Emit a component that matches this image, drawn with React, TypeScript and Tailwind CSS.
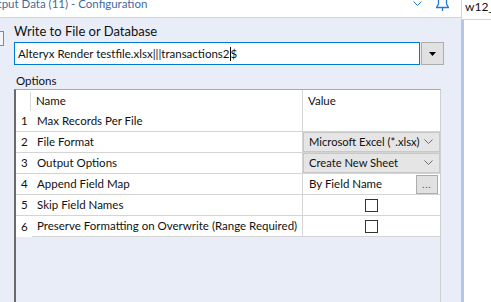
// Output Data tool - configuration panel (Alteryx designer)
import React from "react";

const FONT = { fontFamily: 'Lato, "Open Sans", Arial, sans-serif' };

type Row = { n: number; name: string; kind: "empty" | "combo" | "text" | "check"; value?: string };

const rows: Row[] = [
  { n: 1, name: "Max Records Per File", kind: "empty" },
  { n: 2, name: "File Format", kind: "combo", value: "Microsoft Excel (*.xlsx)" },
  { n: 3, name: "Output Options", kind: "combo", value: "Create New Sheet" },
  { n: 4, name: "Append Field Map", kind: "text", value: "By Field Name" },
  { n: 5, name: "Skip Field Names", kind: "check" },
  { n: 6, name: "Preserve Formatting on Overwrite (Range Required)", kind: "check" },
];

function Chevron({ className }: { className?: string }) {
  return (
    <svg width="9" height="6" viewBox="0 0 9 6" className={className}>
      <path d="M0.5 0.5 L4.5 4.5 L8.5 0.5" fill="none" stroke="currentColor" strokeWidth="1" />
    </svg>
  );
}

function Pin() {
  return (
    <svg width="13" height="11" viewBox="0 0 13 11" className="text-[#1f7ad8]">
      <path d="M2.5 -2 V4 L0.5 7.5 H12.5 L10.5 4 V-2" fill="none" stroke="currentColor" strokeWidth="1.3" />
      <path d="M6.5 7.5 V11" stroke="currentColor" strokeWidth="1.3" />
    </svg>
  );
}

function ValueCell({ row }: { row: Row }) {
  if (row.kind === "combo") {
    return (
      <div className="flex h-full items-center justify-between whitespace-nowrap border border-[#c8c8c8] bg-[#e5e5e5] pl-[5px] pr-[6px]">
        <span className="text-[11.2px]">{row.value}</span>
        <Chevron className="text-[#6b6b6b]" />
      </div>
    );
  }
  if (row.kind === "text") {
    return (
      <div className="flex h-full items-center justify-between whitespace-nowrap pl-[6px] pr-[2px]">
        <span>{row.value}</span>
        <div className="flex h-[19px] w-[22px] items-end justify-center border border-[#adadad] bg-[#e1e1e1] pb-[4px]">
          <span className="text-[9px] leading-none tracking-[1px] text-[#8b1a9a]">...</span>
        </div>
      </div>
    );
  }
  if (row.kind === "check") {
    return (
      <div className="flex h-full items-center justify-center">
        <div className="h-[13px] w-[13px] border border-[#333333] bg-white" />
      </div>
    );
  }
  return null;
}

export default function App() {
  return (
    <div className="flex h-[302px] w-[491px] overflow-hidden bg-white text-[11.5px] text-[#111111]" style={FONT}>
      {/* main configuration column */}
      <div className="flex w-[461px] flex-col">
        <div className="flex h-[18px] shrink-0 items-start justify-between overflow-hidden border-b border-[#d4d4d4] bg-white">
          <span className="-ml-[18px] -mt-[5px] block whitespace-nowrap text-[11.5px] text-[#3f6b9e]">
            Output Data (11) - Configuration
          </span>
          <div className="flex items-start gap-[14px] pr-[12px]">
            <Chevron className="mt-[1px] text-[#1f7ad8]" />
            <Pin />
          </div>
        </div>

        <div className="flex flex-1 bg-[#e9edf8]">
          {/* cut-off neighbour panel */}
          <div className="w-[14px] shrink-0">
            <div className="mt-[13px] h-[15px] w-[4px] border border-l-0 border-[#5b8fd0] bg-[#f3f5fb]" />
          </div>

          <div className="flex flex-1 flex-col">
            <div className="mt-[5px] h-[19px] text-[13px] leading-[16px]">Write to File or Database</div>
            <div className="flex h-[23px] gap-[1px]">
              <div className="flex w-[406px] items-center whitespace-nowrap border border-[#0078d7] bg-white pl-[3px] text-[11.5px]">
                <span>Alteryx Render testfile.xlsx|||transactions2</span>
                <span className="h-[14px] w-[1px] bg-black" />
                <span>$</span>
              </div>
              <div className="flex w-[23px] items-center justify-center border border-[#adadad] bg-[#e1e1e1]">
                <svg width="7" height="4" viewBox="0 0 7 4">
                  <path d="M0 0 H7 L3.5 4 Z" fill="#000" />
                </svg>
              </div>
            </div>
            <div className="ml-[2px] mt-[8px] h-[16px] leading-[16px]">Options</div>

            {/* property grid */}
            <div className="flex w-[427px] flex-1 flex-col border-l-2 border-r border-t border-l-[#6a6a6a] border-r-[#d0d0d0] border-t-[#a8a8a8]">
              <div className="flex h-[21px] bg-white">
                <div className="mt-[2px] w-[15px] shrink-0 border-r border-[#d8d8d8]" />
                <div className="flex w-[271px] items-center pl-[5px]">Name</div>
                <div className="flex flex-1 items-center border-l border-[#d4d4d4] pl-[5px]">Value</div>
              </div>
              {rows.map((r, i) => (
                <div key={r.n} className="flex h-[21px] bg-white">
                  <div
                    className={
                      i === rows.length - 1
                        ? "flex w-[16px] shrink-0 items-center pl-[5px]"
                        : "flex w-[16px] shrink-0 items-center border-b border-[#d4d4d4] pl-[5px]"
                    }
                  >
                    {r.n}
                  </div>
                  <div className="flex w-[270px] items-center whitespace-nowrap border-b border-[#d4d4d4] pl-[5px]">
                    {r.name}
                  </div>
                  <div className="flex-1 border-b border-l border-[#d4d4d4]">
                    <ValueCell row={r} />
                  </div>
                </div>
              ))}
            </div>
          </div>
          <div className="w-[20px] shrink-0" />
        </div>
      </div>

      {/* right-hand docked window edge */}
      <div className="flex flex-1 flex-col">
        <div className="flex h-[20px] shrink-0 border-b border-l border-[#d4d4d4] pl-[3px] text-[12px] leading-[14px]">w12_</div>
        <div className="flex flex-1">
          <div className="w-[3px] bg-[#b4c6e7]" />
          <div className="flex-1 bg-white" />
        </div>
      </div>
    </div>
  );
}
